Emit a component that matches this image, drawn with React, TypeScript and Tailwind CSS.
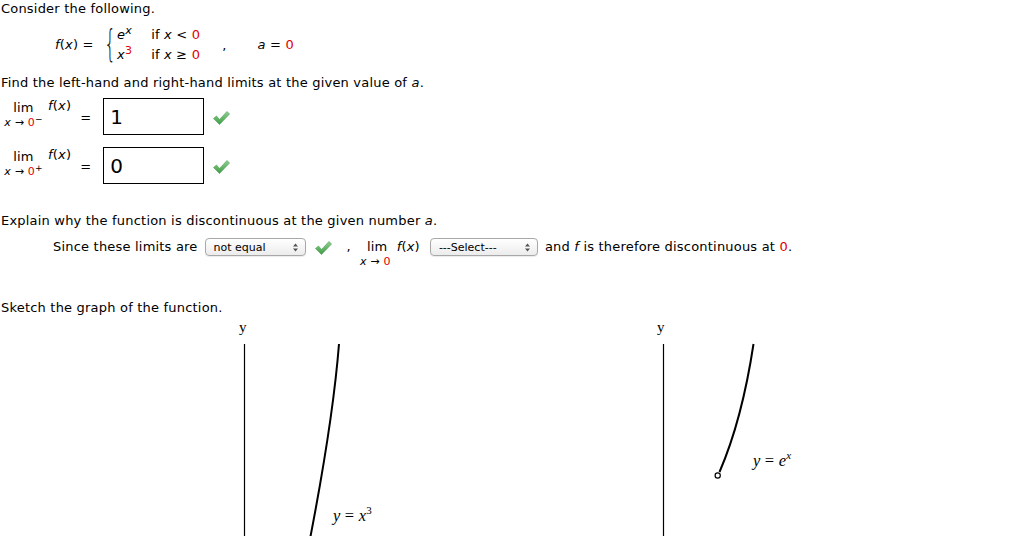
import React from "react";

const red = "text-[#e00000]";

function Check() {
  return (
    <svg width="17" height="14" viewBox="0 0 17 14" className="shrink-0">
      <defs>
        <linearGradient id="chk" x1="0" y1="0" x2="0" y2="1">
          <stop offset="0" stopColor="#8fd18f" />
          <stop offset="1" stopColor="#3f9c46" />
        </linearGradient>
      </defs>
      <polygon points="0.5,7.5 3.5,5 6.5,8.5 14,0.5 16.5,3 6.5,13.5" fill="url(#chk)" stroke="#4a9e50" strokeWidth="0.6" strokeLinejoin="round" />
    </svg>
  );
}

function FakeSelect({ label, width }: { label: string; width: string }) {
  return (
    <div
      className={`${width} h-[18px] flex items-center justify-between rounded-[4px] border border-[#a8a8a8] bg-gradient-to-b from-white to-[#ececec] pl-[8px] pr-[7px] text-[11px] leading-none tracking-normal shadow-[0_1px_1px_rgba(0,0,0,0.08)]`}
    >
      <span>{label}</span>
      <svg width="5" height="9" viewBox="0 0 5 9">
        <polygon points="2.5,0.5 5,3.5 0,3.5" fill="#555" />
        <polygon points="0,5.5 5,5.5 2.5,8.5" fill="#555" />
      </svg>
    </div>
  );
}

function Fx() {
  return (
    <span>
      <i>f</i>(<i>x</i>)
    </span>
  );
}

function LimRow({ side, value }: { side: string; value: string }) {
  return (
    <div className="flex items-start">
      <div className="w-[47px] flex flex-col items-center pt-[2px]">
        <span className="leading-[16px]">lim</span>
        <span className="text-[11px] leading-[14px] whitespace-nowrap">
          <i>x</i> → <span className={red}>0</span>
          <sup className="text-[9px]">{side}</sup>
        </span>
      </div>
      <span className="leading-[16px] ml-[1px]">
        <Fx />
      </span>
      <span className="ml-[9px] mt-[13px] leading-[14px]">=</span>
      <div className="ml-[12px] w-[101px] h-[37px] border border-black flex items-center pl-[6px] text-[20px] tracking-normal font-['DejaVu_Sans',sans-serif]">
        {value}
      </div>
      <div className="ml-[9px] mt-[13px]">
        <Check />
      </div>
    </div>
  );
}

export default function App() {
  return (
    <div className="w-[1013px] h-[536px] overflow-hidden bg-white text-black text-[13px] tracking-[0.2px] font-['DejaVu_Sans',Verdana,sans-serif]">
      <p className="pl-[1px] leading-[16px] pt-[1px]">Consider the following.</p>

      {/* function definition */}
      <div className="flex items-center ml-[55px] mt-[10px] h-[36px]">
        <span>
          <Fx /> =
        </span>
        <span className="ml-[4px] text-[38px] font-['DejaVu_Sans'] font-extralight leading-none scale-x-[0.5] -mt-[5px] text-[#222]">
          {"{"}
        </span>
        <div className="flex flex-col -ml-[5px] leading-[20px]">
          <span>
            <i>e</i>
            <sup className="text-[11px]">
              <i>x</i>
            </sup>
          </span>
          <span>
            <i>x</i>
            <sup className={`text-[11px] ${red}`}>3</sup>
          </span>
        </div>
        <div className="flex flex-col ml-[19px] leading-[20px]">
          <span>
            if <i>x</i> &lt; <span className={red}>0</span>
          </span>
          <span>
            if <i>x</i> ≥ <span className={red}>0</span>
          </span>
        </div>
        <span className="ml-[22px] mt-[2px]">,</span>
        <span className="ml-[31px]">
          <i>a</i> = <span className={red}>0</span>
        </span>
      </div>

      <p className="pl-[1px] mt-[12px] leading-[16px]">
        Find the left-hand and right-hand limits at the given value of <i>a</i>.
      </p>

      <div className="mt-[7px] flex flex-col gap-[12px]">
        <LimRow side="−" value="1" />
        <LimRow side="+" value="0" />
      </div>

      <p className="pl-[1px] mt-[29px] leading-[16px]">
        Explain why the function is discontinuous at the given number <i>a</i>.
      </p>

      <div className="flex items-start ml-[53px] mt-[9px]">
        <span className="leading-[18px]">Since these limits are</span>
        <div className="ml-[7px]">
          <FakeSelect label="not equal" width="w-[101px]" />
        </div>
        <div className="ml-[9px] mt-[3px]">
          <Check />
        </div>
        <span className="ml-[15px] leading-[18px]">,</span>
        <div className="ml-[9px] flex flex-col items-center">
          <span className="leading-[18px] ml-[4px]">lim</span>
          <span className="text-[11px] leading-[12px] whitespace-nowrap">
            <i>x</i> → <span className={red}>0</span>
          </span>
        </div>
        <span className="ml-[6px] leading-[18px]">
          <Fx />
        </span>
        <div className="ml-[10px]">
          <FakeSelect label="---Select---" width="w-[108px]" />
        </div>
        <span className="ml-[7px] leading-[18px]">
          and <i>f</i> is therefore discontinuous at <span className={red}>0</span>.
        </span>
      </div>

      <p className="pl-[1px] mt-[32px] leading-[16px]">Sketch the graph of the function.</p>

      {/* graphs */}
      <div className="flex mt-[3px]">
        <svg width="220" height="220" viewBox="0 0 220 220" className="ml-[200px] shrink-0">
          <text x="39" y="13" fontFamily="Liberation Serif, serif" fontSize="15">y</text>
          <line x1="44.5" y1="25" x2="44.5" y2="220" stroke="#000" strokeWidth="1.2" />
          <path d="M139 25 Q133 101 110 220" fill="none" stroke="#000" strokeWidth="2" />
          <text x="133" y="202" fontFamily="Liberation Serif, serif" fontSize="16.5">
            <tspan fontStyle="italic">y</tspan>
            <tspan> = </tspan>
            <tspan fontStyle="italic">x</tspan>
            <tspan fontSize="11" dy="-7">3</tspan>
          </text>
        </svg>
        <svg width="220" height="220" viewBox="0 0 220 220" className="ml-[200px] shrink-0">
          <text x="37" y="13" fontFamily="Liberation Serif, serif" fontSize="15">y</text>
          <line x1="43.5" y1="25" x2="43.5" y2="220" stroke="#000" strokeWidth="1.2" />
          <path d="M133.5 25 Q122 101 99.5 153" fill="none" stroke="#000" strokeWidth="2" />
          <circle cx="97.7" cy="156.5" r="2.6" fill="#fff" stroke="#000" strokeWidth="1.2" />
          <text x="133" y="147" fontFamily="Liberation Serif, serif" fontSize="16.5">
            <tspan fontStyle="italic">y</tspan>
            <tspan> = </tspan>
            <tspan fontStyle="italic">e</tspan>
            <tspan fontSize="11" dy="-7" fontStyle="italic">x</tspan>
          </text>
        </svg>
      </div>
    </div>
  );
}
